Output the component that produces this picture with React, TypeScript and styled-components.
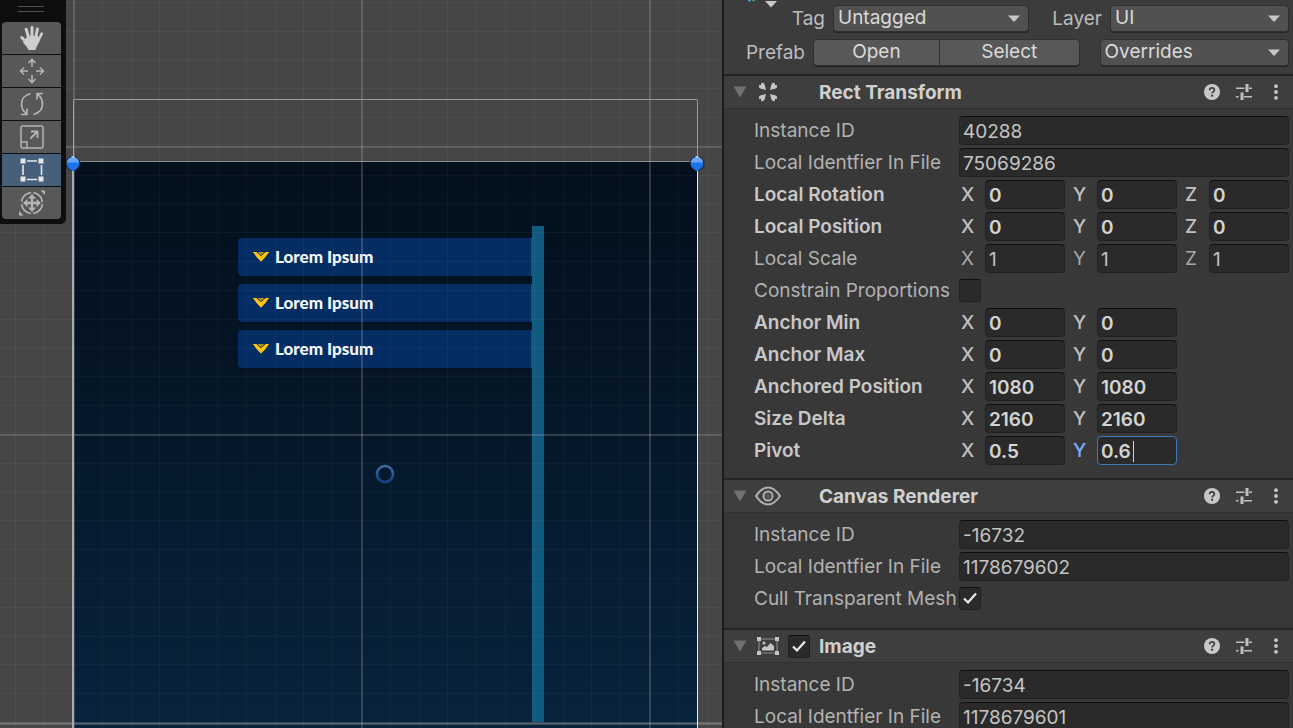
import React, { useId } from "react";
import styled, { createGlobalStyle, css } from "styled-components";

const GlobalStyle = createGlobalStyle`
  * { box-sizing: border-box; }
  body {
    margin: 0;
    background: #383838;
    color: #bdbdbd;
    font-family: Inter, "Liberation Sans", sans-serif;
    font-size: 19px;
    font-optical-sizing: none;
  }
  button, input, select { font: inherit; color: inherit; margin: 0; }
`;

const Editor = styled.div`
  display: grid;
  grid-template-columns: minmax(0, 722fr) minmax(0, 571fr);
  height: 100vh;
  overflow: hidden;
`;

/* ---------- scene view ---------- */

const Scene = styled.main`
  position: relative;
  overflow: hidden;
  background: #464646;
`;

const line = "rgba(255, 255, 255, 0.035)";
const minorStops = [0, 29, 58, 86, 115]
  .map((p) => `transparent ${p}px, ${line} ${p}px, ${line} ${p + 1}px, transparent ${p + 1}px`)
  .join(", ");
const majorStops =
  "rgba(170, 170, 170, 0.25) 0, rgba(170, 170, 170, 0.25) 2px, transparent 2px";
const axis = "rgba(170, 170, 170, 0.3)";

const GridLines = styled.div`
  position: absolute;
  inset: 0;
  pointer-events: none;
  background-image:
    linear-gradient(${axis}, ${axis}),
    linear-gradient(to right, ${majorStops}),
    linear-gradient(to bottom, ${majorStops}),
    linear-gradient(to right, ${minorStops}),
    linear-gradient(to bottom, ${minorStops});
  background-repeat: no-repeat, repeat, repeat, repeat, repeat;
  background-size: 100% 2px, 288px 100%, 100% 288px, 144px 100%, 100% 144px;
  background-position: 0 723px, 361px 0, 0 146px, 73px 0, 0 2px;
`;

const ParentBounds = styled.div`
  position: absolute;
  left: 73px;
  right: 24px;
  top: 99px;
  bottom: 0;
  border: 1px solid #9a9a9a;
  border-bottom: 0;
  border-radius: 2px 2px 0 0;
`;

const Board = styled.div`
  position: absolute;
  left: 73px;
  right: 24px;
  top: 162px;
  bottom: 0;
  display: flex;
  padding: 64px 154px 6px 165px;
  background: linear-gradient(#030f1c, #051627 40%, #08233c);
`;

const Cards = styled.ul`
  flex: 1;
  display: flex;
  flex-direction: column;
  gap: 8px;
  margin: 0;
  padding: 12px 0 0;
  list-style: none;
`;

const Card = styled.li`
  display: flex;
  align-items: center;
  gap: 6px;
  height: 38px;
  padding-left: 15px;
  border-radius: 4px 0 0 4px;
  border-right: 1px solid #075a97;
  background: #042e63;
  color: #f4f6fa;
  box-shadow: 0 1px 2px #02101f;
  font-family: Lato, "Liberation Sans", sans-serif;
  font-size: 17px;
  line-height: 20px;
  font-weight: 900;
`;

const Track = styled.div`
  width: 12px;
  background: #10597f;
`;

const BoardOutline = styled.div`
  position: absolute;
  left: 72px;
  right: 24px;
  top: 161px;
  bottom: 0;
  border: solid #d8dade;
  border-width: 1px 1px 0 2px;
  border-color: #8d8f92 #e8eaee #000 #a9abae;
`;

const Spinner = styled.svg`
  position: absolute;
  left: calc(50% + 14px);
  top: 464px;
`;

const Handle = styled.svg<{ $side: "left" | "right" }>`
  position: absolute;
  top: 155px;
  ${(p) => (p.$side === "left" ? "left: 65px;" : "right: 17px;")}
`;

const ToolStrip = styled.div`
  position: absolute;
  left: 0;
  top: 0;
  width: 66px;
  padding: 6px 5px 5px 2px;
  border-radius: 0 0 5px 0;
  background: #0e0e0e;
`;

const Grip = styled.div`
  width: 26px;
  height: 6px;
  margin: 0 0 10px 16px;
  border: solid #505050;
  border-width: 1px 0;
`;

const ToolList = styled.div`
  display: flex;
  flex-direction: column;
  gap: 1px;
`;

const Tool = styled.button<{ $active?: boolean }>`
  display: grid;
  place-items: center;
  height: 32px;
  padding: 0;
  border: 0;
  background: ${(p) => (p.$active ? "#46607c" : "#585858")};
  color: ${(p) => (p.$active ? "#e6e6e6" : "#b4b4b4")};
  &:first-child { border-radius: 4px 4px 0 0; }
  &:last-child { border-radius: 0 0 4px 4px; }
`;

/* ---------- inspector ---------- */

const Inspector = styled.aside`
  overflow: hidden;
  border-left: 2px solid #1c1c1c;
  background: #383838;
`;

const ObjectHeader = styled.header`
  display: flex;
  flex-direction: column;
  gap: 7px;
  height: 74px;
  padding: 5px 4px 0 21px;
  background: #3c3c3c;
  position: relative;
`;

const HeaderRow = styled.div`
  display: flex;
  align-items: center;
  height: 27px;
`;

const HeaderLabel = styled.label<{ $width: number }>`
  flex: 0 0 ${(p) => p.$width}px;
  padding-right: 8px;
  text-align: right;
  line-height: 26px;
`;

const PrefabMark = styled.svg`
  position: absolute;
  left: 22px;
  top: 0;
`;

const SelectBox = styled.span<{ $grow: number; $gap?: number }>`
  flex: ${(p) => p.$grow} 1 0;
  min-width: 0;
  display: grid;
  align-items: center;
  margin-left: ${(p) => p.$gap ?? 0}px;
  & > * { grid-area: 1 / 1; }
  & > svg { justify-self: end; margin-right: 9px; pointer-events: none; }
`;

const raised = css`
  height: 27px;
  border: 1px solid #303030;
  color: #dadada;
  box-shadow: 0 1px 0 #242424;
`;

const NativeSelect = styled.select`
  ${raised}
  width: 100%;
  appearance: none;
  padding: 0 24px 2px 4px;
  border-radius: 4px;
  background: #515151;
`;

const PrefabButtons = styled.div`
  flex: 266 1 0;
  display: flex;
`;

const PushButton = styled.button<{ $grow: number }>`
  ${raised}
  flex: ${(p) => p.$grow} 1 0;
  padding: 0 0 2px;
  background: #585858;
  &:first-child { border-radius: 4px 0 0 4px; border-right: 0; }
  &:last-child { border-radius: 0 4px 4px 0; }
`;

const ComponentHead = styled.header`
  display: flex;
  align-items: center;
  height: 35px;
  padding: 0 9px;
  border-top: 2px solid #242424;
  border-bottom: 1px solid #303030;
  background: #3e3e3e;
`;

const PlainButton = styled.button<{ $width: number; $gap?: number }>`
  display: grid;
  place-items: center;
  width: ${(p) => p.$width}px;
  height: 24px;
  margin-left: ${(p) => p.$gap ?? 0}px;
  padding: 0;
  border: 0;
  background: none;
`;

const HeadIcon = styled.span`
  display: grid;
  place-items: center;
  width: 28px;
  margin: 0 4px 0 7px;
`;

const HeadToggle = styled.span`
  display: flex;
  width: 33px;
  padding-left: 2px;
`;

const Title = styled.h2`
  flex: 1;
  margin: 0;
  color: #d0d0d0;
  font-size: 19px;
  font-weight: 700;
`;

const Body = styled.div<{ $tail: number }>`
  padding: 5px 4px ${(p) => p.$tail}px 30px;
`;

const Row = styled.div`
  display: grid;
  grid-template-columns: 202px minmax(0, 1fr);
  column-gap: 3px;
  align-items: center;
  height: 32px;
`;

const RowLabel = styled.label<{ $strong?: boolean }>`
  overflow: hidden;
  white-space: nowrap;
  color: ${(p) => (p.$strong ? "#c8c8c8" : "#b2b2b2")};
  font-weight: ${(p) => (p.$strong ? 600 : 400)};
`;

const Field = styled.input<{ $strong?: boolean; $active?: boolean }>`
  width: 100%;
  min-width: 0;
  height: 29px;
  padding: 2px 3px 0;
  border: 1px solid ${(p) => (p.$active ? "#3a79bb" : "#212121")};
  border-top-color: ${(p) => (p.$active ? "#3a79bb" : "#0f0f0f")};
  border-radius: 4px;
  outline: 0;
  background: #2a2a2a;
  color: ${(p) => (p.$strong ? "#d4d4d4" : "#c4c4c4")};
  font-weight: ${(p) => (p.$strong ? 600 : 400)};
`;

const Axes = styled.div`
  display: grid;
  grid-template-columns: repeat(3, minmax(0, 1fr));
  gap: 6px;
`;

const Axis = styled.div`
  position: relative;
  display: grid;
  grid-template-columns: 24px minmax(0, 1fr);
  align-items: center;
  padding-left: 2px;
`;

const AxisLabel = styled.label<{ $strong?: boolean; $active?: boolean }>`
  color: ${(p) => (p.$active ? "#7baefa" : p.$strong ? "#c0c0c0" : "#a8a8a8")};
  font-weight: ${(p) => (p.$strong ? 500 : 400)};
`;

const Caret = styled.span`
  position: absolute;
  left: 62px;
  top: 5px;
  width: 1px;
  height: 21px;
  background: #d4d4d4;
`;

const CheckWrap = styled.span`
  display: grid;
  place-items: center;
  width: 22px;
  height: 23px;
  & > * { grid-area: 1 / 1; }
  & > svg { pointer-events: none; }
`;

const CheckInput = styled.input`
  appearance: none;
  width: 22px;
  height: 23px;
  border: 1px solid #212121;
  border-top-color: #0f0f0f;
  border-radius: 3px;
  background: #2a2a2a;
`;

/* ---------- icons ---------- */

const DropArrow = () => (
  <svg width="12" height="8" viewBox="0 0 12 8" aria-hidden>
    <path d="M0 .5h12L6 7z" fill="#c8c8c8" />
  </svg>
);

const HandIcon = () => (
  <svg width="24" height="26" viewBox="0 0 24 26" fill="#cfcfcf" stroke="#cfcfcf" strokeLinecap="round">
    <g strokeWidth="3" fill="none">
      <path d="M1.800 12.500L7 18M6.200 4.200L9 14M12 2.200V13M17.400 4L15.400 14" />
      <path d="M21.800 8.600L18 16" strokeWidth="2.600" />
    </g>
    <path d="M7.500 11h10.500l1.500 5.500-3 5.500-1 3h-7l-2-3.500-3.500-4z" stroke="none" />
  </svg>
);

const MoveIcon = () => (
  <svg width="26" height="26" viewBox="0 0 26 26" fill="none" stroke="currentColor" strokeWidth="1.600">
    <path d="M13 2v7M13 17v7M2 13h7M17 13h7M9.500 5L13 1.500 16.500 5M9.500 21l3.500 3.500 3.500-3.500M5 9.500L1.500 13 5 16.500M21 9.500L24.500 13 21 16.500" />
  </svg>
);

const RotateIcon = () => (
  <svg width="26" height="26" viewBox="0 0 26 26" fill="none" stroke="currentColor" strokeWidth="1.700">
    <path d="M11.500 2.500C5.500 4 2.500 8.500 2.500 13c0 4 2 7.500 5 9.700M8 17.500v6H2M14.500 23.500c6-1.500 9-6 9-10.500 0-4-2-7.500-5-9.700M18 8.500v-6h6" />
  </svg>
);

const ScaleIcon = () => (
  <svg width="26" height="26" viewBox="0 0 26 26" fill="none" stroke="currentColor" strokeWidth="1.500">
    <rect x="2" y="2" width="22" height="22" rx="1.500" />
    <path d="M2 18h6v6" />
    <path d="M11.500 14.500L18 8M12 7.500h6.500V14" strokeWidth="1.800" />
  </svg>
);

const RectIcon = () => (
  <svg width="26" height="26" viewBox="0 0 26 26" fill="currentColor">
    <path d="M8 4h10M8 22.500h10M4 8v10M22.500 8v10" stroke="currentColor" strokeWidth="1.600" />
    <path d="M1.500 1.500h5v5h-5zM19.500 1.500h5v5h-5zM1.500 19.500h5v5h-5zM19.500 19.500h5v5h-5z" />
  </svg>
);

const TransformIcon = () => (
  <svg width="28" height="28" viewBox="0 0 28 28" fill="currentColor">
    <circle cx="14" cy="14" r="10.500" fill="none" stroke="currentColor" strokeWidth="1.700" strokeDasharray="14 2.490" strokeDashoffset="-1.200" />
    <path d="M14 5l4 4.500h-2.800v3.300h3.300V10L23 14l-4.500 4v-2.800h-3.300v3.300H18L14 23l-4-4.500h2.800v-3.300H9.500V18L5 14l4.500-4v2.800h3.300V9.500H10z" />
    <path d="M22.500 1.500h4.500V6zM1 22v4.500h4.500z" />
  </svg>
);

const ChevronBadge = () => (
  <svg width="16" height="12" viewBox="0 0 16 12">
    <path d="M0 1h3L8 5.800 13 1h3L8 10.500z" fill="#ffc20e" />
    <path d="M4.500 1h7L8 4.800z" fill="#8f741c" />
    <path d="M0 1h3.200L8 5.200 12.800 1H16L12 6.500 8 10.500 4 6.500z" fill="#ffc20e" />
    <path d="M6 1.500h1.500v1H6zM8.500 1.500H10v1H8.500z" fill="#ffc20e" />
  </svg>
);

const Foldout = () => (
  <svg width="14" height="12" viewBox="0 0 14 12">
    <path d="M.5.5h13L7 11.500z" fill="#717171" />
  </svg>
);

const RectTransformIcon = () => (
  <svg width="20" height="20" viewBox="0 0 20 20" fill="#c4c4c4">
    {[0, 90, 180, 270].map((a) => (
      <path key={a} transform={`rotate(${a} 10 10)`} d="M8 8L2.200 6.500Q.3 5.500 1 3.200L3 3 3.200 1Q5.500.3 6.500 2.200z" />
    ))}
  </svg>
);

const EyeIcon = () => (
  <svg width="28" height="20" viewBox="0 0 28 20" fill="none" stroke="#b0b0b0" strokeWidth="2">
    <path d="M2 10C7 2.500 11 1.500 14 1.500S21 2.500 26 10c-5 7.500-9 8.500-12 8.500S7 17.500 2 10z" />
    <circle cx="14" cy="10" r="4.500" />
    <circle cx="14" cy="10" r="1.500" stroke="#777" strokeWidth="1" />
  </svg>
);

const ImageIcon = () => (
  <svg width="24" height="20" viewBox="0 0 24 20" fill="#c4c4c4">
    <path d="M3 3h18v14H3z" fill="none" stroke="#8f8f8f" />
    <path d="M1 1h4v4H1zM19 1h4v4h-4zM1 15h4v4H1zM19 15h4v4h-4zM6 14.500V12l3-2 2 1 3.500-4 3.500 3v4.500z" />
    <circle cx="8" cy="7" r="1.500" />
  </svg>
);

const CheckMark = () => (
  <svg width="16" height="14" viewBox="0 0 16 14" fill="none" stroke="#ececec" strokeWidth="2.200">
    <path d="M2 7.500L6 11.500 14 2.500" />
  </svg>
);

const HelpIcon = () => (
  <svg width="16" height="16" viewBox="0 0 16 16">
    <circle cx="8" cy="8" r="8" fill="#c8c8c8" />
    <path d="M5.600 6.200C5.600 4.600 6.700 3.800 8 3.800s2.400.8 2.400 2.200c0 1.600-2.300 1.700-2.300 3.500" fill="none" stroke="#3e3e3e" strokeWidth="1.700" />
    <rect x="7.100" y="10.700" width="2" height="2" fill="#3e3e3e" />
  </svg>
);

const PresetIcon = () => (
  <svg width="16" height="16" viewBox="0 0 16 16" fill="#c0c0c0">
    <path d="M0 3.500h8.500v1.500H0zM13 3.500h3v1.500h-3zM9.500 0h3v8h-3zM0 12h2.500v1.500H0zM8 12h8v1.500H8zM4.500 8.500h3v7.500h-3z" />
  </svg>
);

const DotsIcon = () => (
  <svg width="6" height="16" viewBox="0 0 6 16" fill="#c8c8c8">
    <circle cx="3" cy="2.200" r="1.900" />
    <circle cx="3" cy="8" r="1.900" />
    <circle cx="3" cy="13.800" r="1.900" />
  </svg>
);

const HandleKnob = ({ side }: { side: "left" | "right" }) => (
  <Handle $side={side} width="16" height="17" viewBox="0 0 16 17">
    <circle cx="8" cy="8.500" r="7.500" fill="#1b2532" opacity="0.85" />
    <circle cx="8" cy="8.500" r="6.300" fill="#1c75ea" />
    <path d="M1.800 7.500a6.300 6.300 0 0 1 12.400 0z" fill="#6ba4f4" />
    <path d="M6.500 1h3v2h-3z" fill="#a9c8f5" />
    <path d="M6.500 14h3v2h-3z" fill="#1c75ea" />
  </Handle>
);

/* ---------- pieces ---------- */

const Check = ({ id, checked, label }: { id?: string; checked?: boolean; label?: string }) => (
  <CheckWrap>
    <CheckInput id={id} type="checkbox" defaultChecked={checked} aria-label={label} />
    {checked && <CheckMark />}
  </CheckWrap>
);

const TextRow = ({ label, value }: { label: string; value: string }) => {
  const id = useId();
  return (
    <Row>
      <RowLabel htmlFor={id}>{label}</RowLabel>
      <Field id={id} defaultValue={value} />
    </Row>
  );
};

const CheckRow = ({ label, checked }: { label: string; checked?: boolean }) => {
  const id = useId();
  return (
    <Row>
      <RowLabel htmlFor={id}>{label}</RowLabel>
      <Check id={id} checked={checked} />
    </Row>
  );
};

type VectorProps = { label: string; values: string[]; strong?: boolean; editing?: number };

const VectorRow = ({ label, values, strong, editing }: VectorProps) => {
  const id = useId();
  return (
    <Row role="group" aria-labelledby={id}>
      <RowLabel as="span" id={id} $strong={strong}>{label}</RowLabel>
      <Axes>
        {values.map((value, i) => (
          <Axis key={i}>
            <AxisLabel htmlFor={`${id}-${i}`} $strong={strong} $active={editing === i}>
              {"XYZ"[i]}
            </AxisLabel>
            <Field id={`${id}-${i}`} defaultValue={value} $strong={strong} $active={editing === i} />
            {editing === i && <Caret />}
          </Axis>
        ))}
      </Axes>
    </Row>
  );
};

type ComponentProps = {
  title: string;
  icon: React.ReactNode;
  toggle?: boolean;
  tail: number;
  children: React.ReactNode;
};

const ComponentPanel = ({ title, icon, toggle, tail, children }: ComponentProps) => (
  <section>
    <ComponentHead>
      <PlainButton $width={14} aria-label={`Collapse ${title}`}><Foldout /></PlainButton>
      <HeadIcon>{icon}</HeadIcon>
      <HeadToggle>{toggle && <Check checked label={`Enable ${title}`} />}</HeadToggle>
      <Title>{title}</Title>
      <PlainButton $width={20} aria-label="Help"><HelpIcon /></PlainButton>
      <PlainButton $width={20} $gap={12} aria-label="Presets"><PresetIcon /></PlainButton>
      <PlainButton $width={16} $gap={14} aria-label="More"><DotsIcon /></PlainButton>
    </ComponentHead>
    <Body $tail={tail}>{children}</Body>
  </section>
);

const tools = [
  { name: "Hand", icon: <HandIcon /> },
  { name: "Move", icon: <MoveIcon /> },
  { name: "Rotate", icon: <RotateIcon /> },
  { name: "Scale", icon: <ScaleIcon /> },
  { name: "Rect", icon: <RectIcon />, active: true },
  { name: "Transform", icon: <TransformIcon /> },
];

export default function App() {
  return (
    <>
      <GlobalStyle />
      <Editor>
        <Scene>
          <ParentBounds />
          <Board>
            <Cards>
              {[0, 1, 2].map((n) => (
                <Card key={n}><ChevronBadge />Lorem Ipsum</Card>
              ))}
            </Cards>
            <Track />
          </Board>
          <GridLines />
          <BoardOutline />
          <Spinner width="20" height="20" viewBox="0 0 20 20">
            <defs>
              <linearGradient id="ring" x1="0" y1="0" x2="0" y2="1">
                <stop offset="0" stopColor="#3f6ba5" />
                <stop offset="1" stopColor="#104486" />
              </linearGradient>
            </defs>
            <circle cx="10" cy="10" r="8" fill="none" stroke="url(#ring)" strokeWidth="2.600" />
          </Spinner>
          <HandleKnob side="left" />
          <HandleKnob side="right" />
          <ToolStrip>
            <Grip />
            <ToolList>
              {tools.map((t) => (
                <Tool key={t.name} aria-label={t.name} $active={t.active}>{t.icon}</Tool>
              ))}
            </ToolList>
          </ToolStrip>
        </Scene>

        <Inspector>
          <ObjectHeader>
            <PrefabMark width="34" height="9" viewBox="0 0 34 9">
              <path d="M2 0h3v1.200H2zM6.500 0h2v1.200h-2z" fill="#4fa3c4" />
              <path d="M19 1h12l-6 6.500z" fill="#c8c8c8" />
            </PrefabMark>
            <HeaderRow>
              <HeaderLabel $width={88} htmlFor="tag">Tag</HeaderLabel>
              <SelectBox $grow={196}>
                <NativeSelect id="tag"><option>Untagged</option></NativeSelect>
                <DropArrow />
              </SelectBox>
              <HeaderLabel $width={81} htmlFor="layer">Layer</HeaderLabel>
              <SelectBox $grow={179}>
                <NativeSelect id="layer"><option>UI</option></NativeSelect>
                <DropArrow />
              </SelectBox>
            </HeaderRow>
            <HeaderRow>
              <HeaderLabel as="span" $width={68}>Prefab</HeaderLabel>
              <PrefabButtons>
                <PushButton $grow={126}>Open</PushButton>
                <PushButton $grow={140}>Select</PushButton>
              </PrefabButtons>
              <SelectBox $grow={189} $gap={20}>
                <NativeSelect aria-label="Overrides"><option>Overrides</option></NativeSelect>
                <DropArrow />
              </SelectBox>
            </HeaderRow>
          </ObjectHeader>

          <ComponentPanel title="Rect Transform" icon={<RectTransformIcon />} tail={12}>
            <TextRow label="Instance ID" value="40288" />
            <TextRow label="Local Identfier In File" value="75069286" />
            <VectorRow label="Local Rotation" values={["0", "0", "0"]} strong />
            <VectorRow label="Local Position" values={["0", "0", "0"]} strong />
            <VectorRow label="Local Scale" values={["1", "1", "1"]} />
            <CheckRow label="Constrain Proportions" />
            <VectorRow label="Anchor Min" values={["0", "0"]} strong />
            <VectorRow label="Anchor Max" values={["0", "0"]} strong />
            <VectorRow label="Anchored Position" values={["1080", "1080"]} strong />
            <VectorRow label="Size Delta" values={["2160", "2160"]} strong />
            <VectorRow label="Pivot" values={["0.5", "0.6"]} strong editing={1} />
          </ComponentPanel>

          <ComponentPanel title="Canvas Renderer" icon={<EyeIcon />} tail={14}>
            <TextRow label="Instance ID" value="-16732" />
            <TextRow label="Local Identfier In File" value="1178679602" />
            <CheckRow label="Cull Transparent Mesh" checked />
          </ComponentPanel>

          <ComponentPanel title="Image" icon={<ImageIcon />} toggle tail={14}>
            <TextRow label="Instance ID" value="-16734" />
            <TextRow label="Local Identfier In File" value="1178679601" />
          </ComponentPanel>
        </Inspector>
      </Editor>
    </>
  );
}
